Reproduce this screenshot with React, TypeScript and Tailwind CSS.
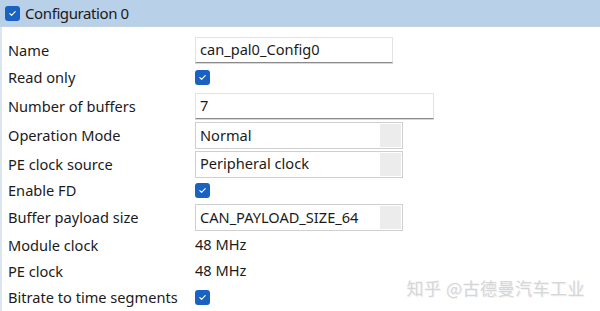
import React from "react";

const font = { fontFamily: '"Noto Sans", "Open Sans", sans-serif' };

function Check() {
  return (
    <span className="flex h-[15px] w-[15px] items-center justify-center rounded-[3px] bg-[#1a62c2]">
      <svg width="9" height="9" viewBox="0 0 10 10" fill="none">
        <path d="M2 5.2l2 2 4-4.4" stroke="#fff" strokeWidth="1.2" strokeLinecap="round" strokeLinejoin="round" />
      </svg>
    </span>
  );
}

function TextBox({ value, width }: { value: string; width: string }) {
  return (
    <div className={`flex h-[26px] items-center border border-[#e3e3e3] border-b-[#8a8a8a] bg-white pl-[4px] shadow-[0_1px_0_#d8d8d8] ${width}`}>
      {value}
    </div>
  );
}

function Combo({ value }: { value: string }) {
  return (
    <div className="flex h-[27px] w-[208px] items-stretch border border-[#cfcfcf] bg-white">
      <div className="flex flex-1 items-center pl-[4px]">{value}</div>
      <div className="my-[1px] mr-[1px] w-[21px] bg-[#ececec]" />
    </div>
  );
}

const rows: { label: string; h: string; field: React.ReactNode }[] = [
  { label: "Name", h: "h-[28px]", field: <TextBox value="can_pal0_Config0" width="w-[198px]" /> },
  { label: "Read only", h: "h-[27px]", field: <Check /> },
  { label: "Number of buffers", h: "h-[30px]", field: <TextBox value="7" width="w-[239px]" /> },
  { label: "Operation Mode", h: "h-[29px]", field: <Combo value="Normal" /> },
  { label: "PE clock source", h: "h-[28px]", field: <Combo value="Peripheral clock" /> },
  { label: "Enable FD", h: "h-[25px]", field: <Check /> },
  { label: "Buffer payload size", h: "h-[29px]", field: <Combo value="CAN_PAYLOAD_SIZE_64" /> },
  { label: "Module clock", h: "h-[26px]", field: <span>48 MHz</span> },
  { label: "PE clock", h: "h-[26px]", field: <span>48 MHz</span> },
  { label: "Bitrate to time segments", h: "h-[26px]", field: <Check /> },
];

export default function App() {
  return (
    <div className="relative h-[311px] w-[600px] overflow-hidden bg-white text-[14.6px] text-[#1b1b1b]" style={font}>
      {/* header */}
      <div className="flex h-[27px] items-center gap-[5px] border-b border-[#c2d2e2] bg-[#b9d0e9] pl-[5px]">
        <Check />
        <span className="text-[15px] leading-none tracking-[-0.4px] text-[#1a1a1a]">Configuration 0</span>
      </div>

      <div className="flex h-[284px] border-l-2 border-[#dce6f0]">
        <div className="flex flex-col pt-[9px]">
          {rows.map((r) => (
            <div key={r.label} className={`flex items-center ${r.h}`}>
              <div className="w-[193px] pl-[6px] leading-none">{r.label}</div>
              {r.field}
            </div>
          ))}
        </div>
      </div>

      {/* watermark */}
      <div
        className="absolute right-[15px] bottom-[15px] text-[17px] leading-none tracking-[0.5px] text-[#d6d6d6] [text-shadow:1px_1px_0_#f2f2f2]"
        style={{ fontFamily: '"Noto Sans CJK SC", "Noto Sans", sans-serif' }}
      >
        知乎 @古德曼汽车工业
      </div>
    </div>
  );
}
